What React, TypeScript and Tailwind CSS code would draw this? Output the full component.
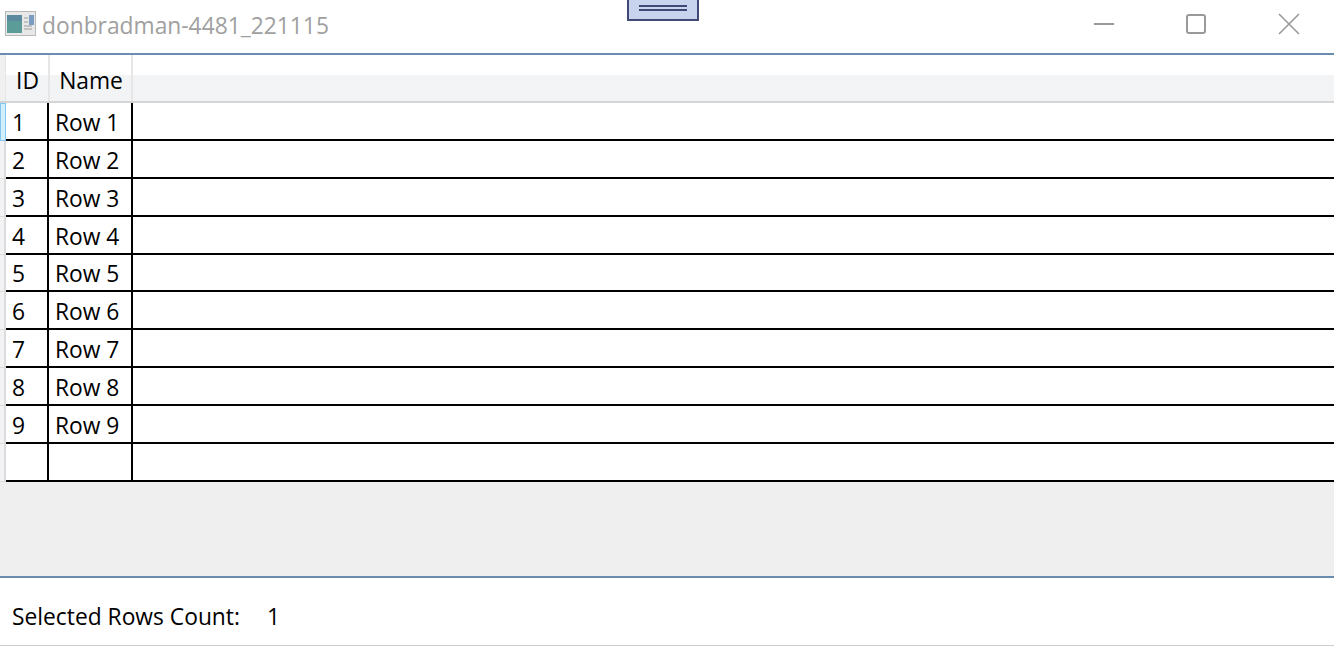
const rows = ["1", "2", "3", "4", "5", "6", "7", "8", "9", ""];

export default function App() {
  return (
    <div className="flex h-[646px] w-[1334px] flex-col overflow-hidden bg-white font-['Open_Sans','Noto_Sans',sans-serif] text-[22.8px] text-black">
      <TitleBar />
      <div className="flex h-[523px] flex-col border-b-2 border-[#6b8cae] bg-[#efefef]">
        <div className="flex h-[48px] bg-[linear-gradient(#ffffff_0,#ffffff_20px,#f3f4f6_20px,#f2f3f5_100%)] border-b-2 border-[#d5d5d5]">
          <div className="w-[6px] border-r border-[#e6e6e6] bg-[#f0f0f0]" />
          <div className="flex w-[44px] items-center justify-center border-r-2 border-[#e6e6e6] pl-[1px] pt-[6px]">ID</div>
          <div className="flex w-[83px] items-center justify-center border-r-2 border-[#e6e6e6] pl-[1px] pt-[6px]">Name</div>
        </div>
        {rows.map((id, i) => (
          <div key={i} className="flex h-[37.9px] shrink-0">
            <div className={i === 0 ? "w-[6px] border border-[#80c8f0] bg-[#d4eefc]" : "w-[6px] border-r-2 border-b border-[#dcdcdc] bg-[#f3f3f5]"} />
            <div className="flex flex-1 border-b-2 border-black bg-white">
              <div className="flex w-[43px] items-center border-r-2 border-black pl-[6px] pt-[4px]">{id}</div>
              <div className="flex w-[84px] items-center border-r-2 border-black pl-[6px] pt-[4px]">{id && `Row ${id}`}</div>
            </div>
          </div>
        ))}
      </div>
      <div className="flex h-[68px] items-center border-b border-[#cccccc] pl-[12px] pt-[11px]">
        <span className="w-[255px]">Selected Rows Count:</span>
        <span>1</span>
      </div>
    </div>
  );
}

function TitleBar() {
  return (
    <div className="relative flex h-[55px] items-center border-b-2 border-[#6b8cae]">
      <svg width="32" height="25" viewBox="0 0 32 25" className="mb-[7px] ml-[5px]">
        <rect x="0.5" y="0.5" width="30" height="24" fill="#e8e8e8" stroke="#b8b8b8" />
        <rect x="2" y="4" width="15" height="18" fill="#5c9c98" />
        <rect x="2" y="4" width="15" height="6" fill="#5a8aa0" />
        <rect x="24" y="4" width="5" height="10" fill="#7a9cc0" />
        <path d="M19 7h4M19 11h4M19 15h8M19 18h8" stroke="#9a9a9a" />
      </svg>
      <span className="ml-[5px] text-[#a0a0a0]">donbradman-4481_221115</span>
      <div className="absolute left-[627px] top-0 flex h-[21px] w-[72px] justify-center border-2 border-t-0 border-[#3f4a78] bg-[#c8d4ee] pt-[5px]">
        <div className="h-[6px] w-[48px] border-y-2 border-[#3f4a78]" />
      </div>
      <div className="mb-[6px] ml-auto flex items-center">
        <svg width="22" height="22" viewBox="0 0 22 22" className="mr-[70px]">
          <path d="M1 11h20" stroke="#999999" strokeWidth="2" />
        </svg>
        <svg width="22" height="22" viewBox="0 0 22 22" className="mr-[71px]">
          <rect x="2" y="2" width="18" height="18" rx="2" fill="none" stroke="#999999" strokeWidth="2" />
        </svg>
        <svg width="22" height="22" viewBox="0 0 22 22" className="mr-[34px]">
          <path d="M1 1l20 20M21 1L1 21" stroke="#999999" strokeWidth="1.6" />
        </svg>
      </div>
    </div>
  );
}
